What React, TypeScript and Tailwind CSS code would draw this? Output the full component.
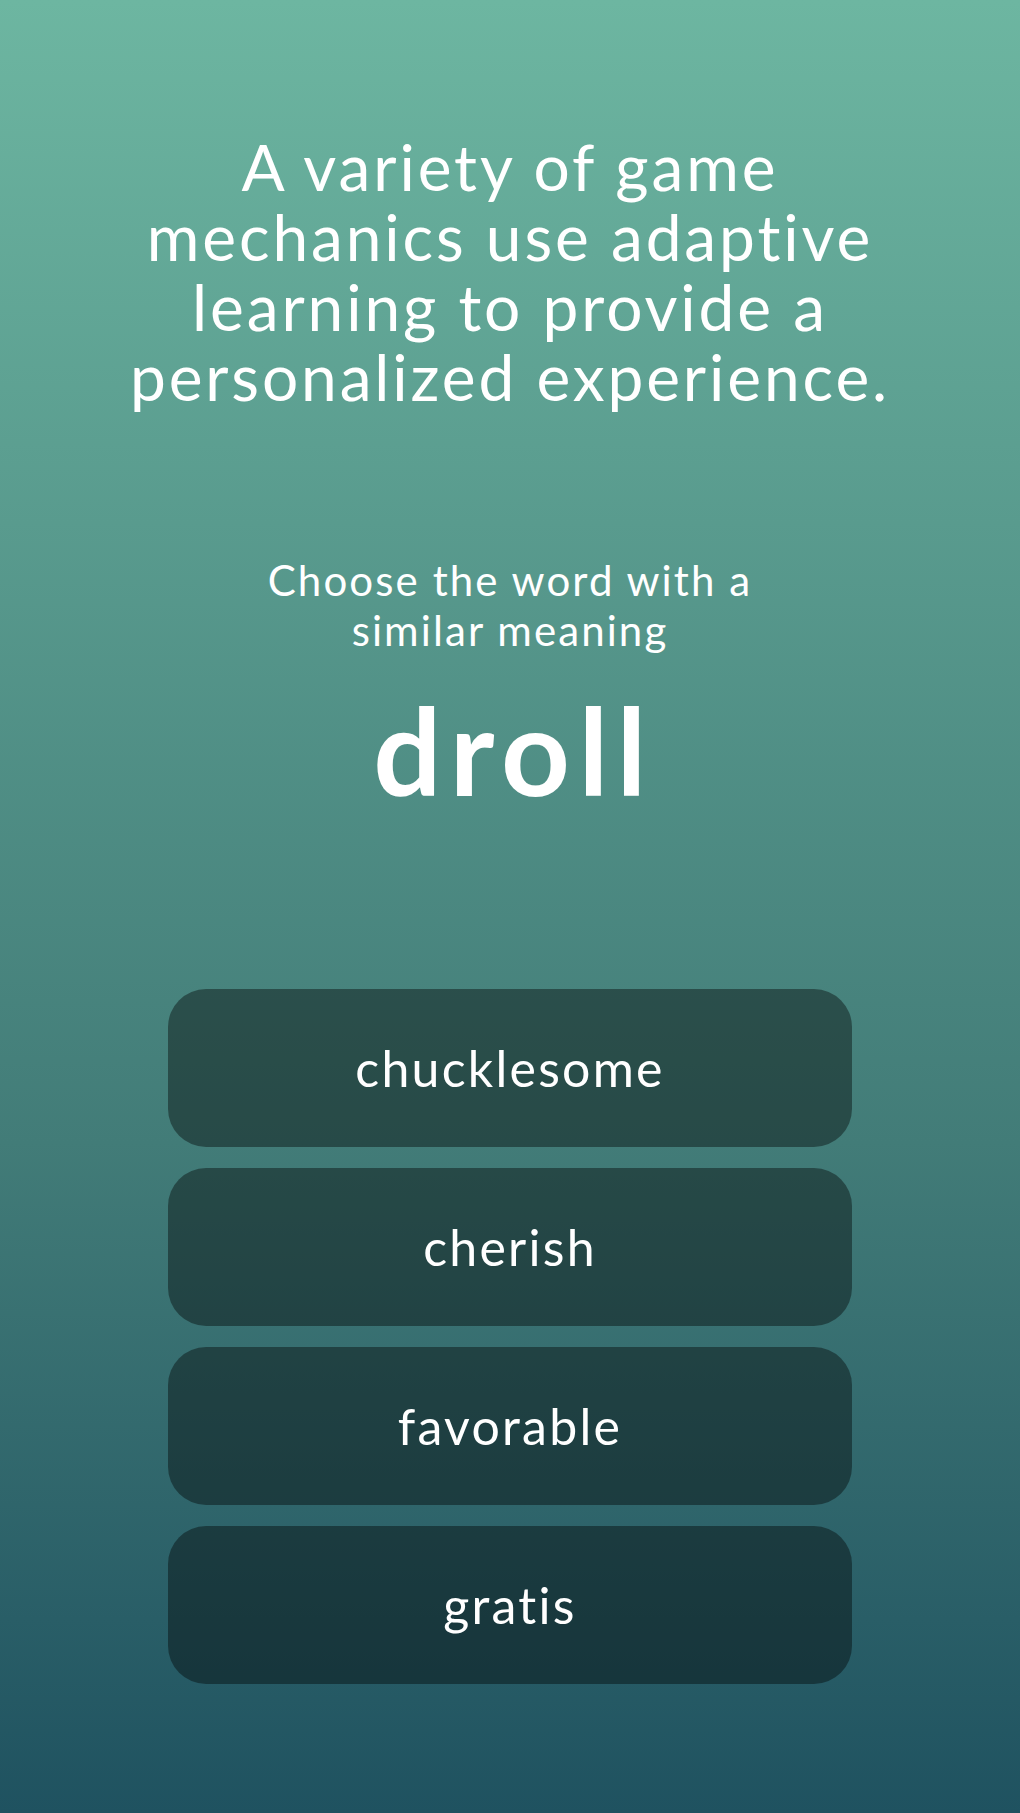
import React from 'react';

const options = ['chucklesome', 'cherish', 'favorable', 'gratis'];

const App: React.FC = () => {
  return (
    <div
      className="min-h-[1813px] w-full bg-gradient-to-b from-[#6db6a1] via-[#427c78] via-[63%] to-[#1f5260] text-white [font-variant-ligatures:none]"
      style={{ fontFamily: 'Lato, "Open Sans", sans-serif' }}
    >
      <div className="flex flex-col items-center pt-[132px]">
        {/* intro */}
        <h1 className="text-center text-[64px] leading-[70px] font-normal tracking-[0.045em]">
          A variety of game
          <br />
          mechanics use adaptive
          <br />
          learning to provide a
          <br />
          personalized experience.
        </h1>

        {/* prompt */}
        <p className="mt-[143px] text-center text-[42px] leading-[50px] tracking-[0.05em]">
          Choose the word with a
          <br />
          similar meaning
        </p>
        <h2 className="mt-[35px] pl-[8px] text-[120px] leading-none font-bold tracking-[0.07em]">droll</h2>

        {/* choices */}
        <div className="mt-[179px] flex w-[684px] flex-col gap-[21px]">
          {options.map((word) => (
            <button
              key={word}
              className="flex h-[158px] w-full items-center justify-center rounded-[38px] bg-black/40 text-[50px] leading-none tracking-[0.045em]"
            >
              {word}
            </button>
          ))}
        </div>
      </div>
    </div>
  );
};

export default App;
